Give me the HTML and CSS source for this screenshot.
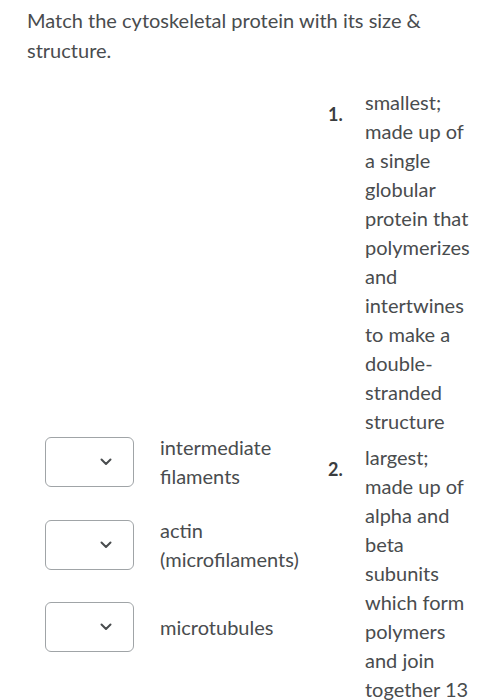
FILE: index.html
```html
<!DOCTYPE html>
<html>
<head>
<meta charset="utf-8">
<link rel="stylesheet" href="styles.css">
</head>
<body>
<div class="page">
  <p class="question">Match the cytoskeletal protein with its size &amp; structure.</p>
  <div class="match">
    <div class="choices">
      <div class="row">
        <div class="select"><svg class="chev" width="12" height="8" viewBox="0 0 12 8"><path d="M1.5 1.5 L6 6 L10.5 1.5" fill="none" stroke="#494c4e" stroke-width="2" stroke-linecap="round" stroke-linejoin="round"/></svg></div>
        <div class="label">intermediate filaments</div>
      </div>
      <div class="row">
        <div class="select"><svg class="chev" width="12" height="8" viewBox="0 0 12 8"><path d="M1.5 1.5 L6 6 L10.5 1.5" fill="none" stroke="#494c4e" stroke-width="2" stroke-linecap="round" stroke-linejoin="round"/></svg></div>
        <div class="label">actin (microfilaments)</div>
      </div>
      <div class="row row-last">
        <div class="select"><svg class="chev" width="12" height="8" viewBox="0 0 12 8"><path d="M1.5 1.5 L6 6 L10.5 1.5" fill="none" stroke="#494c4e" stroke-width="2" stroke-linecap="round" stroke-linejoin="round"/></svg></div>
        <div class="label">microtubules</div>
      </div>
    </div>
    <ol class="answers">
      <li class="item"><span class="num">1.</span><span class="text">smallest; made up of a single globular protein that polymerizes and intertwines to make a double-stranded structure</span></li>
      <li class="item"><span class="num">2.</span><span class="text">largest; made up of alpha and beta subunits which form polymers and join together 13</span></li>
    </ol>
  </div>
</div>
</body>
</html>
```

FILE: styles.css
```css
html, body {
  margin: 0;
  padding: 0;
  background: #ffffff;
}
body {
  font-family: Lato, "Noto Sans", sans-serif;
  color: #494c4e;
}
.page {
  padding: 5px 27px 0 27px;
}
.question {
  margin: 0;
  font-size: 20px;
  line-height: 30px;
  width: 440px;
}
.match {
  display: flex;
  margin-top: 23px;
}
.choices {
  width: 306px;
  padding-left: 18px;
  padding-top: 345px;
  box-sizing: border-box;
  display: flex;
  flex-direction: column;
  gap: 25px;
}
.row {
  display: flex;
  align-items: center;
  gap: 26px;
}
.row-last {
  margin-top: 3px;
}
.select {
  width: 89px;
  height: 50px;
  box-sizing: border-box;
  border: 1px solid #a0a4a7;
  border-radius: 6px;
  display: flex;
  align-items: center;
  justify-content: flex-end;
  padding-right: 21px;
  flex: none;
}
.label {
  font-size: 20px;
  line-height: 29px;
  width: 150px;
}
.answers {
  list-style: none;
  margin: 0;
  padding: 0;
  display: flex;
  flex-direction: column;
  gap: 7px;
}
.item {
  display: flex;
}
.num {
  width: 37px;
  flex: none;
  font-size: 18px;
  font-weight: bold;
  color: #3a3d3f;
  padding-top: 17px;
  line-height: 18px;
}
.text {
  width: 108px;
  font-size: 20px;
  line-height: 29px;
}
```
